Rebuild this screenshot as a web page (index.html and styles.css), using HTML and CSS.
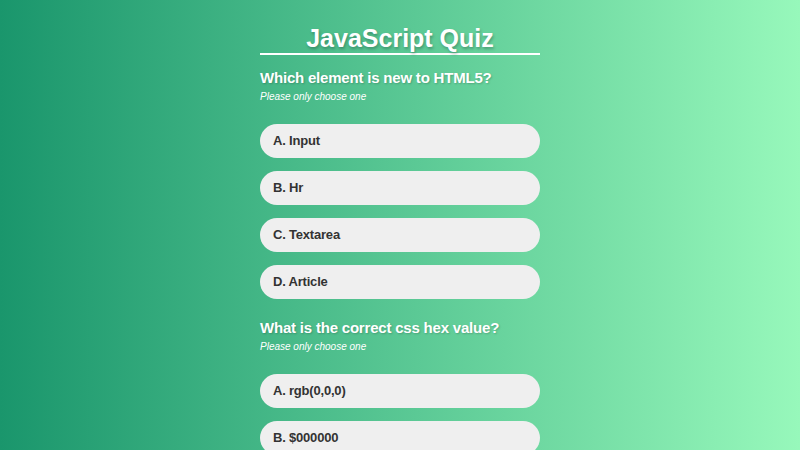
FILE: index.html
```html
<!DOCTYPE html>
<html>
<head>
<meta charset="utf-8">
<link rel="stylesheet" href="styles.css">
</head>
<body>
<main class="quiz">
  <h1 class="title">JavaScript Quiz</h1>
  <section class="question">
    <h2 class="q-text">Which element is new to HTML5?</h2>
    <p class="q-hint">Please only choose one</p>
    <ul class="options">
      <li class="option">A. Input</li>
      <li class="option">B. Hr</li>
      <li class="option">C. Textarea</li>
      <li class="option">D. Article</li>
    </ul>
  </section>
  <section class="question">
    <h2 class="q-text">What is the correct css hex value?</h2>
    <p class="q-hint">Please only choose one</p>
    <ul class="options">
      <li class="option">A. rgb(0,0,0)</li>
      <li class="option">B. $000000</li>
      <li class="option">C. #000000</li>
      <li class="option">D. 000000</li>
    </ul>
  </section>
</main>
</body>
</html>
```
FILE: styles.css
```css
html, body {
  margin: 0;
  padding: 0;
  height: 100%;
  overflow: hidden;
}
body {
  background: linear-gradient(to right, #1a966c, #97f8bb);
  font-family: "Liberation Sans", Arial, sans-serif;
  color: #fff;
}
.quiz {
  width: 280px;
  margin: 0 auto;
  padding-top: 23px;
}
.title {
  margin: 0;
  font-size: 25px;
  font-weight: bold;
  text-align: center;
  line-height: 30px;
  border-bottom: 2px solid #fff;
  text-shadow: 1px 2px 3px rgba(0,0,0,0.25);
}
.question {
  margin-bottom: 20px;
}
.q-text {
  margin: 14px 0 0;
  font-size: 15px;
  line-height: 18px;
  font-weight: bold;
  letter-spacing: -0.2px;
  text-shadow: 1px 1px 2px rgba(0,0,0,0.2);
}
.q-hint {
  margin: 4px 0 0;
  font-size: 10px;
  font-style: italic;
  line-height: 12px;
}
.options {
  list-style: none;
  margin: 21px 0 0;
  padding: 0;
  display: flex;
  flex-direction: column;
  gap: 13px;
}
.option {
  height: 34px;
  line-height: 34px;
  border-radius: 17px;
  background: #efefef;
  color: #333;
  font-size: 13px;
  font-weight: bold;
  letter-spacing: -0.2px;
  padding-left: 13px;
}
```
